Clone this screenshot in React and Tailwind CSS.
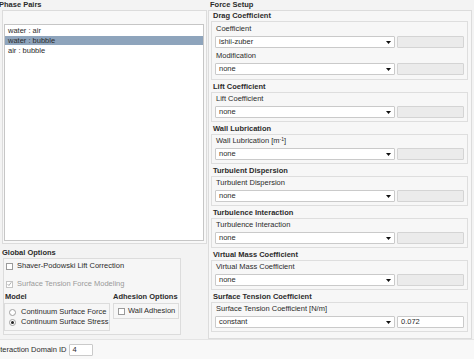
import React from 'react';

const groups = [
  { title: 'Lift Coefficient', label: 'Lift Coefficient', value: 'none' },
  { title: 'Wall Lubrication', label: 'wall', value: 'none' },
  { title: 'Turbulent Dispersion', label: 'Turbulent Dispersion', value: 'none' },
  { title: 'Turbulence Interaction', label: 'Turbulence Interaction', value: 'none' },
  { title: 'Virtual Mass Coefficient', label: 'Virtual Mass Coefficient', value: 'none' },
  { title: 'Surface Tension Coefficient', label: 'Surface Tension Coefficient [N/m]', value: 'constant', input: '0.072' },
];

function Arrow() {
  return (
    <svg width="5" height="3" viewBox="0 0 5 3" className="shrink-0">
      <path d="M0 0 L5 0 L2.5 3 Z" fill="#111" />
    </svg>
  );
}

function Select({ value }) {
  return (
    <div className="flex h-[12px] w-[180px] items-center justify-between rounded-[1px] border border-[#cacaca] bg-white pl-[3px] pr-[3px]">
      <span className="leading-[10px]">{value}</span>
      <Arrow />
    </div>
  );
}

function SideInput({ value }) {
  if (value) {
    return (
      <div className="flex h-[12px] w-[67px] items-center rounded-[1px] border border-[#cacaca] bg-white pl-[3px]">
        <span className="leading-[10px]">{value}</span>
      </div>
    );
  }
  return <div className="h-[12px] w-[67px] rounded-[1px] border border-[#d4d4d4] bg-[#ebebeb]" />;
}

function Row({ value, input }) {
  return (
    <div className="flex gap-[2px]">
      <Select value={value} />
      <SideInput value={input} />
    </div>
  );
}

function Checkbox({ checked, disabled }) {
  return (
    <div
      className={`flex h-[7px] w-[7px] shrink-0 items-center justify-center border bg-white ${
        disabled ? 'border-[#c4c4c4]' : 'border-[#9a9a9a]'
      }`}
    >
      {checked && (
        <svg width="6" height="6" viewBox="0 0 6 6">
          <path d="M0.8 3.2 L2.3 4.8 L5.2 0.9" fill="none" stroke="#9a9a9a" strokeWidth="1" />
        </svg>
      )}
    </div>
  );
}

function Radio({ checked }) {
  return (
    <div className="flex h-[7px] w-[7px] shrink-0 items-center justify-center rounded-full border border-[#a0a0a0] bg-white">
      {checked && <div className="h-[3px] w-[3px] rounded-full bg-[#222]" />}
    </div>
  );
}

export default function App() {
  return (
    <div className="relative h-[359px] w-[474px] overflow-hidden bg-[#f3f3f3] font-['Liberation_Sans',Arial,sans-serif] text-[7.5px] text-[#2b2b2b]">
      <div className="flex h-[339px]">
        {/* left column */}
        <div className="w-[207px] shrink-0">
          <div className="ml-[-1px] h-[10px] font-bold leading-[10px]">Phase Pairs</div>
          <div className="ml-[2px] h-[234px] w-[205px] border border-[#dcdcdc] bg-[#f8f8f8] pb-[2px] pl-[1px] pr-[2px] pt-[13px]">
            <div className="h-[217px] w-[200px] border border-[#c6c6c6] bg-white pt-px">
              <div className="h-[10px] pl-[3px] leading-[10px]">water : air</div>
              <div className="h-[9px] bg-[#8ea4bc] pl-[3px] leading-[9px]">water : bubble</div>
              <div className="h-[10px] pl-[3px] leading-[11px]">air : bubble</div>
            </div>
          </div>

          <div className="ml-[2px] mt-[4px] h-[10px] font-bold leading-[10px]">Global Options</div>
          <div className="ml-[3px] w-[178px] border border-[#dcdcdc] bg-[#f6f6f6] pb-[3px] pt-[2px]">
            <div className="flex h-[10px] items-center gap-[4px] pl-[2px]">
              <Checkbox />
              <span className="leading-[10px]">Shaver-Podowski Lift Correction</span>
            </div>
            <div className="mt-[8px] flex h-[10px] items-center gap-[4px] pl-[2px]">
              <Checkbox checked disabled />
              <span className="leading-[10px] text-[#9a9a9a]">Surface Tension Force Modeling</span>
            </div>
            <div className="mt-[3px] flex gap-[3px]">
              <div className="w-[106px]">
                <div className="h-[10px] pl-[1px] font-bold leading-[10px]">Model</div>
                <div className="mt-px w-[106px] border border-[#dcdcdc] pb-[3px] pl-[4px] pt-[3px]">
                  <div className="flex h-[10px] items-center gap-[5px]">
                    <Radio />
                    <span className="leading-[10px]">Continuum Surface Force</span>
                  </div>
                  <div className="flex h-[10px] items-center gap-[5px]">
                    <Radio checked />
                    <span className="leading-[10px]">Continuum Surface Stress</span>
                  </div>
                </div>
              </div>
              <div className="w-[66px]">
                <div className="h-[10px] font-bold leading-[10px]">Adhesion Options</div>
                <div className="mt-px w-[66px] border border-[#dcdcdc] pb-[2px] pl-[4px] pt-[2px]">
                  <div className="flex h-[10px] items-center gap-[3px]">
                    <Checkbox />
                    <span className="leading-[10px]">Wall Adhesion</span>
                  </div>
                </div>
              </div>
            </div>
          </div>
        </div>

        {/* right column */}
        <div className="w-[266px] shrink-0">
          <div className="h-[10px] pl-[3px] font-bold leading-[10px]">Force Setup</div>
          <div className="ml-px w-[264px] border border-[#dcdcdc] bg-[#f7f7f7] pb-[6px] pl-[2px] pr-[3px]">
            <div className="h-[10px] pl-[2px] font-bold leading-[10px]">Drag Coefficient</div>
            <div className="w-[257px] border border-[#dedede] pb-[4px] pl-[3px] pt-[2px]">
              <div className="h-[10px] pl-px leading-[10px]">Coefficient</div>
              <div className="mt-[2px]">
                <Row value="ishii-zuber" />
              </div>
              <div className="mt-[3px] h-[10px] pl-px leading-[10px]">Modification</div>
              <div className="mt-[2px]">
                <Row value="none" />
              </div>
            </div>

            {groups.map((g) => (
              <div key={g.title} className="mt-[2px]">
                <div className="h-[10px] pl-[2px] font-bold leading-[10px]">{g.title}</div>
                <div className="w-[257px] border border-[#dedede] pb-[3px] pl-[3px] pt-px">
                  <div className="h-[10px] pl-px leading-[10px]">
                    {g.label === 'wall' ? (
                      <>
                        Wall Lubrication [m<sup className="text-[5px]">-1</sup>]
                      </>
                    ) : (
                      g.label
                    )}
                  </div>
                  <div className="mt-[2px]">
                    <Row value={g.value} input={g.input} />
                  </div>
                </div>
              </div>
            ))}
          </div>
        </div>
      </div>

      {/* bottom bar */}
      <div className="flex h-[20px] items-center border-t border-[#e4e4e4] bg-[#f8f8f8] pt-[1px]">
        <span className="ml-[-6px] leading-[10px]">Interaction Domain ID</span>
        <div className="ml-[2px] flex h-[12px] w-[24px] items-center rounded-[1px] border border-[#cacaca] bg-white pl-[3px]">
          <span className="leading-[10px]">4</span>
        </div>
      </div>
    </div>
  );
}
